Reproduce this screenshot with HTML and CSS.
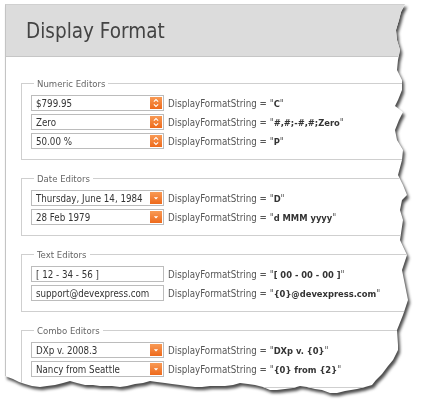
FILE: index.html
```html
<!DOCTYPE html>
<html lang="en">
<head>
  <meta charset="UTF-8">
  <title>Display Format</title>
  <link rel="stylesheet" href="styles.css">
</head>
<body>
  <div class="sheet">
    <div class="paper">
      <div class="page-header">
        <h1>Display Format</h1>
      </div>

      <fieldset class="group">
        <legend>Numeric Editors</legend>
        <div class="row">
          <div class="editor"><span class="value">$799.95</span><span class="btn spin"><svg viewBox="0 0 12 14"><path d="M3.5 5.5 6 3 8.5 5.5M3.5 8.5 6 11 8.5 8.5"/></svg></span></div>
          <div class="caption">DisplayFormatString = "<b>C</b>"</div>
        </div>
        <div class="row">
          <div class="editor"><span class="value">Zero</span><span class="btn spin"><svg viewBox="0 0 12 14"><path d="M3.5 5.5 6 3 8.5 5.5M3.5 8.5 6 11 8.5 8.5"/></svg></span></div>
          <div class="caption">DisplayFormatString = "<b>#,#;-#,#;Zero</b>"</div>
        </div>
        <div class="row">
          <div class="editor"><span class="value">50.00 %</span><span class="btn spin"><svg viewBox="0 0 12 14"><path d="M3.5 5.5 6 3 8.5 5.5M3.5 8.5 6 11 8.5 8.5"/></svg></span></div>
          <div class="caption">DisplayFormatString = "<b>P</b>"</div>
        </div>
      </fieldset>

      <fieldset class="group">
        <legend>Date Editors</legend>
        <div class="row">
          <div class="editor"><span class="value">Thursday, June 14, 1984</span><span class="btn drop"><svg viewBox="0 0 12 14"><path d="M3.5 6h5L6 8.8z"/></svg></span></div>
          <div class="caption">DisplayFormatString = "<b>D</b>"</div>
        </div>
        <div class="row">
          <div class="editor"><span class="value">28 Feb 1979</span><span class="btn drop"><svg viewBox="0 0 12 14"><path d="M3.5 6h5L6 8.8z"/></svg></span></div>
          <div class="caption">DisplayFormatString = "<b>d MMM yyyy</b>"</div>
        </div>
      </fieldset>

      <fieldset class="group">
        <legend>Text Editors</legend>
        <div class="row">
          <div class="editor"><span class="value">[ 12 - 34 - 56 ]</span></div>
          <div class="caption">DisplayFormatString = "<b>[ 00 - 00 - 00 ]</b>"</div>
        </div>
        <div class="row">
          <div class="editor"><span class="value">support@devexpress.com</span></div>
          <div class="caption">DisplayFormatString = "<b>{0}@devexpress.com</b>"</div>
        </div>
      </fieldset>

      <fieldset class="group">
        <legend>Combo Editors</legend>
        <div class="row">
          <div class="editor"><span class="value">DXp v. 2008.3</span><span class="btn drop"><svg viewBox="0 0 12 14"><path d="M3.5 6h5L6 8.8z"/></svg></span></div>
          <div class="caption">DisplayFormatString = "<b>DXp v. {0}</b>"</div>
        </div>
        <div class="row">
          <div class="editor"><span class="value">Nancy from Seattle</span><span class="btn drop"><svg viewBox="0 0 12 14"><path d="M3.5 6h5L6 8.8z"/></svg></span></div>
          <div class="caption">DisplayFormatString = "<b>{0} from {2}</b>"</div>
        </div>
      </fieldset>
    </div>
  </div>
</body>
</html>
```

FILE: styles.css
```css
body {
  margin: 0;
  background: #fff;
  font-family: "DejaVu Sans", Tahoma, sans-serif;
  font-stretch: condensed;
  color: #333;
}
.sheet {
  padding: 4px 0 0 5px;
  filter: drop-shadow(2px 3px 1.5px rgba(0,0,0,0.7));
}
.paper {
  width: 414px;
  height: 396px;
  background: #fff;
  border-left: 1px solid #c4c4c4;
  border-top: 1px solid #d0d0d0;
  box-sizing: border-box;
  overflow: hidden;
  clip-path: polygon(0 0, 400px 0, 396px 8px, 394px 16px, 391px 26px, 392px 36px, 395px 46px, 393px 56px, 392px 66px, 397px 76px, 397px 86px, 393px 96px, 390px 102px, 398px 108px, 394px 116px, 390px 126px, 392px 136px, 398px 146px, 397px 156px, 393px 171px, 398px 181px, 402px 191px, 397px 196px, 395px 206px, 398px 216px, 395px 236px, 402px 251px, 397px 266px, 400px 281px, 403px 296px, 398px 311px, 392px 326px, 393px 341px, 393px 346px, 388px 356px, 383px 362px, 377px 370px, 371px 376px, 367px 381px, 360px 383px, 352px 385px, 340px 387px, 332px 389px, 325px 389px, 317px 386px, 310px 385px, 302px 383px, 295px 382px, 288px 384px, 280px 385px, 272px 386px, 265px 386px, 258px 383px, 250px 381px, 243px 380px, 235px 379px, 228px 381px, 220px 382px, 212px 382px, 205px 382px, 197px 383px, 190px 383px, 182px 382px, 175px 381px, 167px 380px, 160px 379px, 152px 378px, 145px 377px, 138px 379px, 130px 380px, 122px 382px, 115px 383px, 107px 382px, 95px 382px, 88px 381px, 80px 381px, 72px 379px, 65px 377px, 58px 379px, 50px 381px, 42px 382px, 35px 383px, 27px 382px, 20px 380px, 14px 378px, 8px 375px, 0 372px);
}
.page-header {
  height: 51px;
  background: #dcdcdc;
  border-bottom: 1px solid #c6c6c6;
  display: flex;
  align-items: center;
  padding-left: 20px;
}
.page-header h1 {
  margin: 0;
  font-family: "DejaVu Sans", Tahoma, sans-serif;
  font-weight: normal;
  font-size: 20.5px;
  color: #444;
}
.group {
  margin: 21px 0 13px 15px;
  width: 420px;
  padding: 6px 0 10px 9px;
  border: 1px solid #cfcfcf;
  border-right: none;
  box-sizing: border-box;
}
.group + .group {
  margin-top: 0;
}
.group legend {
  margin-left: 3px;
  padding: 0 3px;
  font-size: 9.5px;
  color: #666;
}
.row {
  display: flex;
  align-items: center;
  height: 16px;
  margin-bottom: 3px;
  font-size: 9.7px;
}
.row:last-child {
  margin-bottom: 0;
}
.editor {
  width: 133px;
  height: 16px;
  box-sizing: border-box;
  border: 1px solid #bcbcbc;
  background: #fff;
  display: flex;
  align-items: center;
  padding: 0 1px 0 4px;
}
.value {
  flex: 1;
  white-space: nowrap;
  color: #333;
}
.btn {
  width: 12px;
  height: 12px;
  background: linear-gradient(#f89a55, #ee6a1c);
  display: flex;
}
.btn svg {
  width: 12px;
  height: 12px;
}
.spin svg path {
  fill: none;
  stroke: #fff;
  stroke-width: 1.2;
}
.drop svg path {
  fill: #fff;
}
.caption {
  margin-left: 4px;
  white-space: nowrap;
  color: #555;
}
.caption b {
  font-size: 9.3px;
  color: #333;
}
```
